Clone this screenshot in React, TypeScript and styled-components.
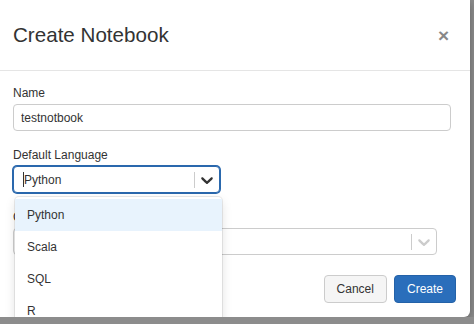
import React from 'react'
import styled, { createGlobalStyle } from 'styled-components'

const GlobalStyle = createGlobalStyle`
  html, body {
    margin: 0;
    padding: 0;
    overflow: hidden;
    background: #8c8c8c;
    font-family: "Liberation Sans", Arial, sans-serif;
  }
`

const Modal = styled.div`
  width: 470px;
  background: #fff;
  border-radius: 0 0 6px 0;
  box-shadow: 0 3px 9px rgba(0, 0, 0, 0.3);
  color: #333;
`

const Header = styled.div`
  height: 70px;
  border-bottom: 1px solid #e5e5e5;
  display: flex;
  align-items: center;
  justify-content: space-between;
  padding: 0 21px 0 13px;
`

const Title = styled.h4`
  margin: 0;
  font-size: 20.6px;
  font-weight: normal;
  line-height: 1;
  color: #333;
`

const Close = styled.button`
  border: 0;
  background: none;
  padding: 0;
  font-family: "Liberation Sans", Arial, sans-serif;
  font-size: 19px;
  font-weight: bold;
  line-height: 1;
  color: #888;
  cursor: pointer;
`

const Body = styled.div`
  padding: 15px 19px 0 13px;
`

const FormGroup = styled.div`
  margin-bottom: 17px;
  position: relative;

  &:last-child {
    margin-bottom: 0;
  }
`

const Label = styled.label`
  display: block;
  font-size: 12px;
  line-height: 15px;
  margin-bottom: 3px;
  color: #333;
`

const Input = styled.input`
  box-sizing: border-box;
  width: 100%;
  height: 27px;
  border: 1px solid #ccc;
  border-radius: 4px;
  padding: 0 7px;
  font-family: "Liberation Sans", Arial, sans-serif;
  font-size: 12px;
  color: #333;
  outline: none;
`

const SelectControl = styled.div<{ $focused?: boolean; $width: number }>`
  box-sizing: border-box;
  width: ${p => p.$width}px;
  height: 27px;
  display: flex;
  align-items: center;
  border: 1px solid ${p => (p.$focused ? '#2a68ad' : '#ccc')};
  box-shadow: ${p => (p.$focused ? '0 0 0 1px #2a68ad' : 'none')};
  border-radius: 4px;
  background: #fff;
`

const SelectValue = styled.div`
  flex: 1;
  display: flex;
  align-items: center;
  padding-left: 9px;
  font-size: 12px;
  color: #333;
`

const Caret = styled.span`
  display: inline-block;
  width: 1px;
  height: 15px;
  background: #333;
`

const Separator = styled.span`
  width: 1px;
  height: 16px;
  background: #ccc;
`

const Indicator = styled.div<{ $focused?: boolean }>`
  width: 24px;
  display: flex;
  align-items: center;
  justify-content: center;
  color: ${p => (p.$focused ? '#333' : '#ccc')};
`

const Menu = styled.div`
  position: absolute;
  top: 49px;
  left: 2px;
  width: 207px;
  background: #fff;
  border-radius: 4px;
  box-shadow: 0 0 0 1px rgba(0, 0, 0, 0.08), 0 4px 11px rgba(0, 0, 0, 0.12);
  padding: 2px 0;
  z-index: 10;
`

const Option = styled.div<{ $active?: boolean }>`
  height: 32px;
  display: flex;
  align-items: center;
  padding-left: 12px;
  font-size: 12px;
  color: #333;
  background: ${p => (p.$active ? '#e8f3fd' : '#fff')};
`

const Footer = styled.div`
  display: flex;
  justify-content: flex-end;
  gap: 7px;
  padding: 20px 14px 14px;
`

const Button = styled.button<{ $primary?: boolean }>`
  box-sizing: border-box;
  height: 28px;
  padding: 0 12px;
  border-radius: 4px;
  font-family: "Liberation Sans", Arial, sans-serif;
  font-size: 12px;
  border: 1px solid ${p => (p.$primary ? '#2462a8' : '#ccc')};
  background: ${p => (p.$primary ? '#2a6ebb' : '#f5f5f5')};
  color: ${p => (p.$primary ? '#fff' : '#333')};
`

const Chevron = () => (
  <svg width="20" height="20" viewBox="0 0 20 20" fill="currentColor">
    <path d="M4.516 7.548c0.436-0.446 1.043-0.481 1.576 0l3.908 3.747 3.908-3.747c0.533-0.481 1.141-0.446 1.574 0 0.436 0.445 0.408 1.197 0 1.615-0.406 0.418-4.695 4.502-4.695 4.502-0.217 0.223-0.502 0.335-0.787 0.335s-0.57-0.112-0.789-0.335c0 0-4.287-4.084-4.695-4.502s-0.436-1.17 0-1.615z" />
  </svg>
)

const languages = ['Python', 'Scala', 'SQL', 'R']

export default function App() {
  return (
    <>
      <GlobalStyle />
      <Modal>
        <Header>
          <Title>Create Notebook</Title>
          <Close>×</Close>
        </Header>
        <Body>
          <FormGroup>
            <Label>Name</Label>
            <Input defaultValue="testnotbook" />
          </FormGroup>
          <FormGroup>
            <Label>Default Language</Label>
            <SelectControl $focused $width={207}>
              <SelectValue>
                <Caret />
                Python
              </SelectValue>
              <Separator />
              <Indicator $focused>
                <Chevron />
              </Indicator>
            </SelectControl>
            <Menu>
              {languages.map((l, i) => (
                <Option key={l} $active={i === 0}>
                  {l}
                </Option>
              ))}
            </Menu>
          </FormGroup>
          <FormGroup>
            <Label>Cluster</Label>
            <SelectControl $width={424}>
              <SelectValue />
              <Separator />
              <Indicator>
                <Chevron />
              </Indicator>
            </SelectControl>
          </FormGroup>
        </Body>
        <Footer>
          <Button>Cancel</Button>
          <Button $primary>Create</Button>
        </Footer>
      </Modal>
    </>
  )
}
